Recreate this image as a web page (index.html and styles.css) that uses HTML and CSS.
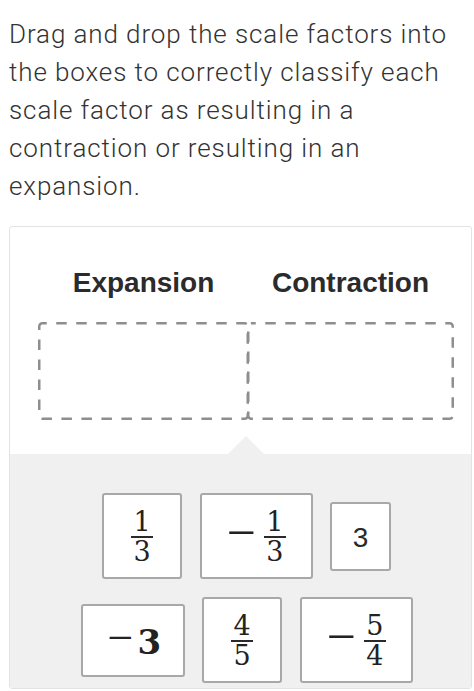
FILE: index.html
```html
<!DOCTYPE html>
<html lang="en">
<head>
<meta charset="utf-8">
<title>Scale factors</title>
<link rel="stylesheet" href="styles.css">
</head>
<body>
<div class="page">
  <p class="prompt">Drag and drop the scale factors into the boxes to correctly classify each scale factor as resulting in a contraction or resulting in an expansion.</p>
  <div class="card">
    <div class="targets">
      <div class="col col-left">
        <h2 class="heading">Expansion</h2>
        <div class="zone">
          <svg width="211" height="98" viewBox="0 0 211 98"><rect x="1.25" y="1.25" width="208.5" height="95.5" rx="3" fill="none" stroke="#8e8e8e" stroke-width="2.5" stroke-dasharray="10.5 9.5" stroke-dashoffset="6"/></svg>
        </div>
      </div>
      <div class="col col-right">
        <h2 class="heading">Contraction</h2>
        <div class="zone">
          <svg width="207" height="98" viewBox="0 0 207 98"><rect x="1.25" y="1.25" width="204.5" height="95.5" rx="3" fill="none" stroke="#8e8e8e" stroke-width="2.5" stroke-dasharray="10.5 9.5" stroke-dashoffset="6"/></svg>
        </div>
      </div>
    </div>
    <div class="bank">
      <div class="row">
        <div class="tile tile-frac"><span class="frac"><span class="num">1</span><span class="den">3</span></span></div>
        <div class="tile tile-neg"><span class="minus">−</span><span class="frac"><span class="num">1</span><span class="den">3</span></span></div>
        <div class="tile tile-int"><span class="int">3</span></div>
      </div>
      <div class="row">
        <div class="tile tile-negint"><span class="minus minus-sm">−</span><span class="bigint">3</span></div>
        <div class="tile tile-frac"><span class="frac"><span class="num">4</span><span class="den">5</span></span></div>
        <div class="tile tile-neg"><span class="minus">−</span><span class="frac"><span class="num">5</span><span class="den">4</span></span></div>
      </div>
    </div>
  </div>
</div>
</body>
</html>
```

FILE: styles.css
```css
* { box-sizing: border-box; }

html, body {
  margin: 0;
  padding: 0;
  background: #ffffff;
}

.page {
  padding: 15px 2px 0 9px;
}

.prompt {
  margin: 0;
  font-family: Roboto, "Liberation Sans", Arial, sans-serif;
  font-weight: 300;
  font-size: 26px;
  line-height: 38px;
  letter-spacing: 0.9px;
  color: #333333;
}

.card {
  margin-top: 21px;
  border: 1px solid #e3e3e3;
  border-radius: 3px;
  background: #ffffff;
}

.targets {
  display: flex;
  padding: 39px 17px 34px 28px;
}

.col {
  display: flex;
  flex-direction: column;
  align-items: center;
}

.col-left { width: 211px; }
.col-right { width: 207px; margin-left: -2px; }

.heading {
  margin: 0;
  font-family: "Liberation Sans", Arial, sans-serif;
  font-weight: bold;
  font-size: 28px;
  line-height: 34px;
  color: #2b2b2b;
}

.zone {
  margin-top: 22px;
  height: 98px;
}

.zone svg { display: block; }

.bank {
  position: relative;
  background: #f0f0f0;
  padding: 39px 0 5px 12px;
  display: flex;
  flex-direction: column;
  gap: 18px;
}

.bank::before {
  content: "";
  position: absolute;
  left: 218px;
  bottom: 100%;
  border-left: 18px solid transparent;
  border-right: 18px solid transparent;
  border-bottom: 18px solid #f0f0f0;
}

.row {
  display: flex;
  justify-content: center;
  align-items: center;
  gap: 17.5px;
}

.tile {
  display: flex;
  align-items: center;
  justify-content: center;
  background: #ffffff;
  border: 2px solid #a8a8a8;
  border-radius: 3px;
  color: #222222;
}

.tile-frac {
  width: 80px;
  height: 86px;
  padding-top: 2px;
}

.tile-neg {
  width: 113px;
  height: 86px;
  padding-top: 2px;
  justify-content: flex-start;
  padding-left: 25px;
}

.tile-int {
  width: 61px;
  height: 69px;
  padding-top: 4px;
}

.tile-negint {
  width: 104px;
  height: 73px;
  padding-top: 4px;
  justify-content: flex-start;
  padding-left: 25px;
}

.frac {
  display: inline-flex;
  flex-direction: column;
  font-family: "DejaVu Serif", "Liberation Serif", serif;
  font-size: 27px;
  line-height: 22px;
  text-align: center;
}

.num {
  padding: 0 2.5px 3px;
  border-bottom: 2px solid #2a2a2a;
}

.den {
  padding-top: 3px;
}

.minus {
  font-family: "Liberation Serif", "Times New Roman", serif;
  font-size: 52px;
  line-height: 1;
  margin-right: 8px;
  margin-bottom: 9px;
}

.minus-sm {
  font-size: 46px;
  margin-right: 4px;
  margin-bottom: 8px;
}

.int {
  font-family: "Liberation Sans", Arial, sans-serif;
  font-size: 28px;
  line-height: 1;
  color: #2a2a2a;
}

.bigint {
  font-family: "DejaVu Serif", "Liberation Serif", serif;
  font-weight: bold;
  font-size: 34px;
  line-height: 1;
}
```
